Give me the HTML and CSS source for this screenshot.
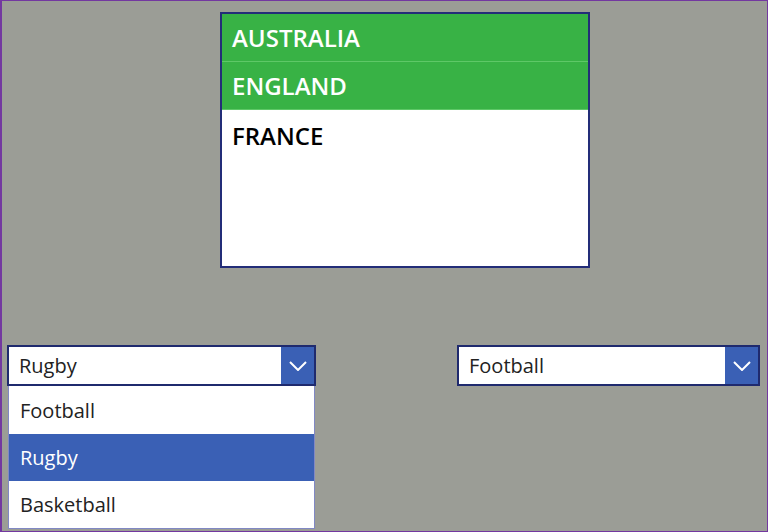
FILE: index.html
```html
<!DOCTYPE html>
<html lang="en">
<head>
    <meta charset="UTF-8">
    <meta name="viewport" content="width=device-width, initial-scale=1.0">
    <title>Gallery and dropdowns</title>
    <link rel="stylesheet" href="styles.css">
</head>
<body>

<div class="screen">
    <div class="gallery">
        <div class="gallery-row selected">AUSTRALIA</div>
        <div class="gallery-row selected">ENGLAND</div>
        <div class="gallery-row">FRANCE</div>
    </div>

    <div class="controls">
        <div class="dropdown-wrap left">
            <div class="dropdown">
                <span class="dropdown-value">Rugby</span>
                <span class="chevron">
                    <svg width="18" height="10" viewBox="0 0 18 10"><path d="M1 1 L9 9 L17 1" fill="none" stroke="#fff" stroke-width="2"/></svg>
                </span>
            </div>
            <ul class="dropdown-list">
                <li>Football</li>
                <li class="active">Rugby</li>
                <li>Basketball</li>
            </ul>
        </div>

        <div class="dropdown-wrap right">
            <div class="dropdown">
                <span class="dropdown-value">Football</span>
                <span class="chevron">
                    <svg width="18" height="10" viewBox="0 0 18 10"><path d="M1 1 L9 9 L17 1" fill="none" stroke="#fff" stroke-width="2"/></svg>
                </span>
            </div>
        </div>
    </div>
</div>

</body>
</html>
```

FILE: styles.css
```css
body {
    margin: 0;
    padding: 0;
    font-family: 'Open Sans', 'Noto Sans', sans-serif;
}
.screen {
    width: 768px;
    height: 532px;
    box-sizing: border-box;
    background-color: #9b9d96;
    border: 1px solid #7338a0;
    border-left-width: 2px;
    padding-top: 11px;
    overflow: hidden;
}
.gallery {
    margin-left: 218px;
    width: 370px;
    height: 256px;
    box-sizing: border-box;
    border: 2px solid #232d78;
    background-color: #fff;
}
.gallery-row {
    height: 48px;
    box-sizing: border-box;
    padding-left: 10px;
    padding-top: 2px;
    font-size: 24px;
    font-weight: 600;
    line-height: 48px;
    color: #000;
}
.gallery-row.selected {
    padding-top: 0;
    background-color: #38b245;
    color: #fff;
    border-bottom: 1px solid #5ec867;
}
.controls {
    display: flex;
    margin-top: 77px;
}
.dropdown-wrap.left {
    margin-left: 5px;
    width: 309px;
}
.dropdown-wrap.right {
    margin-left: 141px;
    width: 303px;
}
.dropdown {
    display: flex;
    height: 41px;
    box-sizing: border-box;
    border: 2px solid #1f2a6e;
    background-color: #fff;
}
.dropdown-value {
    flex: 1;
    padding-left: 10px;
    font-size: 20px;
    line-height: 38px;
    color: #222;
}
.chevron {
    width: 33px;
    background-color: #3a60b5;
    display: flex;
    align-items: center;
    justify-content: center;
}
.dropdown-list {
    list-style: none;
    margin: 0 1px;
    padding: 1px 0 0;
    border: 1px solid #8188c4;
    border-top: none;
    background-color: #fff;
}
.dropdown-list li {
    height: 47px;
    padding-left: 11px;
    font-size: 20px;
    line-height: 48px;
    color: #222;
}
.dropdown-list li.active {
    background-color: #3a60b5;
    color: #fff;
}
```
